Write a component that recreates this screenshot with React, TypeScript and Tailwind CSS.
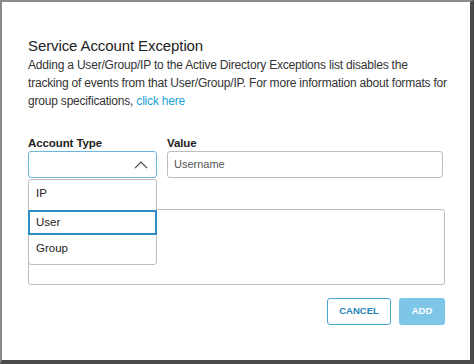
import React from 'react';

const font = { fontFamily: '"Liberation Sans", Arial, sans-serif' };

// Account type options shown in the open dropdown
const options = ['IP', 'User', 'Group'];

function ChevronUp() {
  return (
    <svg width="14" height="8" viewBox="0 0 14 8" fill="none" className="text-[#444]">
      <path d="M1 7.2 L7 1.2 L13 7.2" stroke="currentColor" strokeWidth="1.2" />
    </svg>
  );
}

export default function App() {
  return (
    <div
      className="w-[474px] h-[364px] bg-white border-l-2 border-t-2 border-r-4 border-b-4 border-l-[#8a8a8a] border-t-[#8a8a8a] border-r-[#4a4a4a] border-b-[#4a4a4a] text-[#333]"
      style={font}
    >
      <div className="pl-[26px] pr-[25px] pt-[34px]">
        <h2 className="text-[15px] leading-[20px] tracking-[-0.1px] text-[#222]">Service Account Exception</h2>
        <p className="text-[12px] leading-[18px] tracking-[-0.2px] text-[#333] whitespace-nowrap">
          Adding a User/Group/IP to the Active Directory Exceptions list disables the
          <br />
          tracking of events from that User/Group/IP. For more information about formats for
          <br />
          group specifications, <span className="text-[#1ca0d4]">click here</span>
        </p>

        <div className="relative mt-[25px] flex gap-[10px]">
          <div className="w-[129px]">
            <div className="text-[11.5px] leading-[16px] tracking-[-0.1px] font-bold text-[#222]">Account Type</div>
            <div className="h-[27px] border border-[#6db7db] rounded-[3px] flex items-center justify-end pr-[8px]">
              <ChevronUp />
            </div>
          </div>
          <div className="w-[276px]">
            <div className="text-[11.5px] leading-[16px] tracking-[-0.1px] font-bold text-[#222]">Value</div>
            <div className="h-[27px] border border-[#bdbdbd] rounded-[3px] flex items-center px-[6px] text-[11px] text-[#555]">
              Username
            </div>
          </div>

          {/* open dropdown list overlaying the textarea */}
          <div className="absolute left-0 top-[44px] w-[129px] h-[86px] bg-white border border-[#bdbdbd] rounded-[3px] z-10 flex flex-col">
            {options.map((o) =>
              o === 'User' ? (
                <div
                  key={o}
                  className="h-[25px] mx-[-1px] mt-[2px] border-2 border-[#2f8cc4] flex items-center pl-[6px] text-[11.5px] text-[#222]"
                >
                  {o}
                </div>
              ) : (
                <div key={o} className="h-[28px] flex items-center pl-[7px] text-[11.5px] text-[#222]">
                  {o}
                </div>
              ),
            )}
          </div>
        </div>

        <div className="mt-[31px] h-[76px] w-[417px] border border-[#bdbdbd] rounded-[3px]" />

        <div className="mt-[13px] flex justify-end gap-[8px]">
          <button className="w-[64px] h-[27px] border-[1.5px] border-[#4aa6d4] rounded-[3px] text-[9.5px] font-bold text-[#1f84b9]">
            CANCEL
          </button>
          <button className="w-[46px] h-[27px] bg-[#7ec6e8] rounded-[3px] text-[9.5px] font-bold text-white">
            ADD
          </button>
        </div>
      </div>
    </div>
  );
}
